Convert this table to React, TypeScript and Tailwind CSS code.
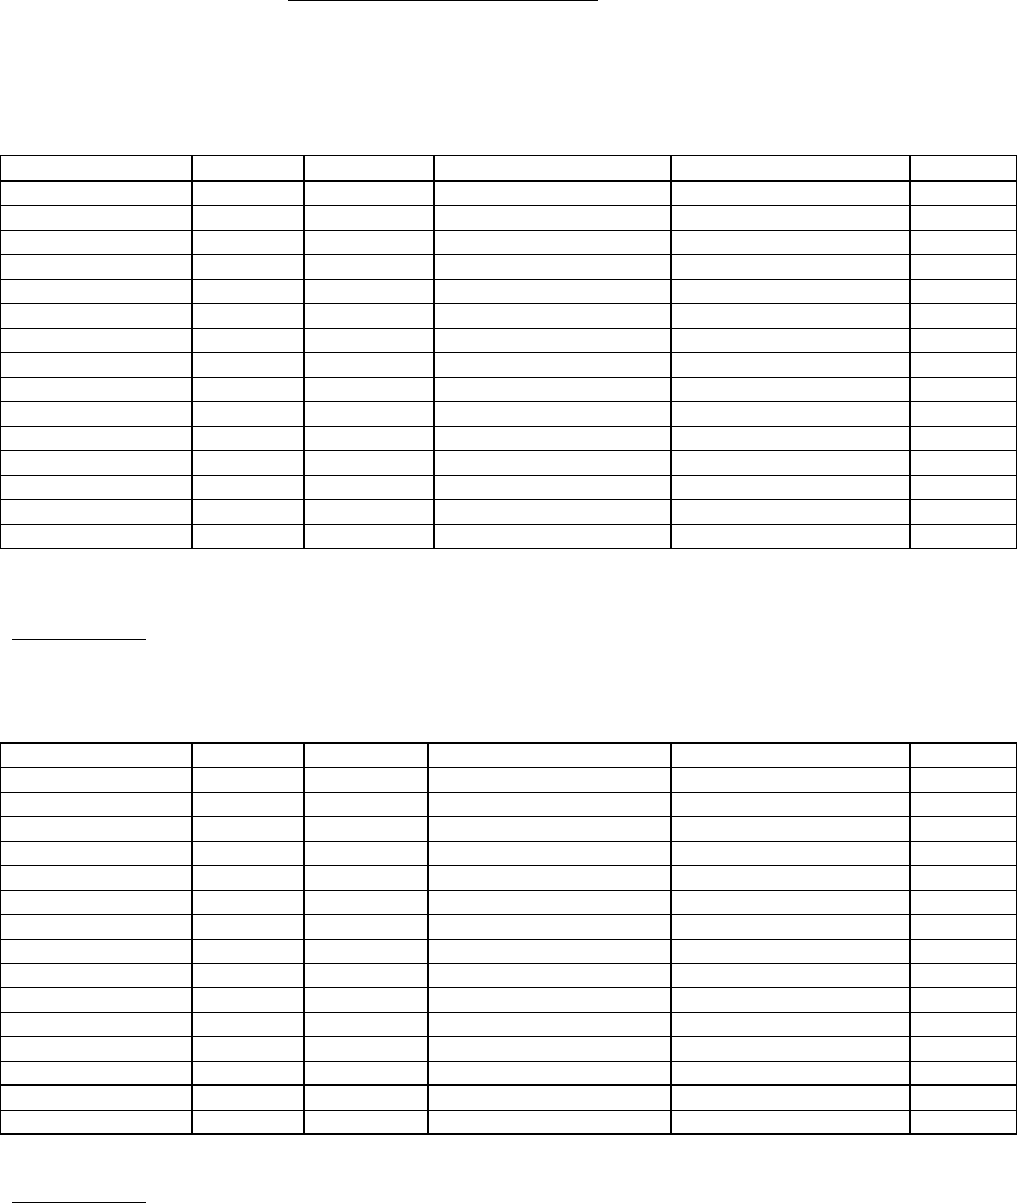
import React from "react";

type TableProps = {
  cols: string;
  rows: number;
  variant: 1 | 2;
};

function Row({ cols, className }: { cols: "a" | "b"; className: string }) {
  const grid =
    cols === "a"
      ? "grid grid-cols-[193px_112px_130px_237px_239px_106px]"
      : "grid grid-cols-[193px_112px_124px_243px_239px_106px]";
  return (
    <div className={`${grid} ${className}`}>
      <div className="border-l border-r-2 border-black" />
      <div className="border-r-2 border-black" />
      <div className="border-r-2 border-black" />
      <div className="border-r-2 border-black" />
      <div className="border-r-2 border-black" />
      <div className="border-r border-black" />
    </div>
  );
}

function Table1() {
  const rows = Array.from({ length: 15 }, (_, i) => i);
  return (
    <div className="w-[1017px]">
      <Row cols="a" className="h-[27px] border-t border-b-2 border-black" />
      {rows.map((i) => (
        <Row key={i} cols="a" className="h-[24.47px] border-b border-black" />
      ))}
    </div>
  );
}

function Table2() {
  const rows = Array.from({ length: 16 }, (_, i) => i);
  return (
    <div className="w-[1017px] border-t-2 border-black">
      {rows.map((i) => (
        <Row
          key={i}
          cols="b"
          className={
            i === 13 || i === 15
              ? "h-[24.44px] border-b-2 border-black"
              : "h-[24.44px] border-b border-black"
          }
        />
      ))}
    </div>
  );
}

export default function App() {
  return (
    <div
      className="w-[1017px] h-[1203px] overflow-hidden bg-white"
      style={{ fontFamily: '"Liberation Sans", Arial, sans-serif' }}
    >
      <div className="ml-[288px] w-[310px] h-px bg-black" />
      <div className="mt-[154px]">
        <Table1 />
      </div>
      <div className="mt-[90px] ml-[12px] w-[134px] h-px bg-black" />
      <div className="mt-[102px]">
        <Table2 />
      </div>
      <div className="mt-[67px] ml-[12px] w-[134px] h-px bg-black" />
    </div>
  );
}
